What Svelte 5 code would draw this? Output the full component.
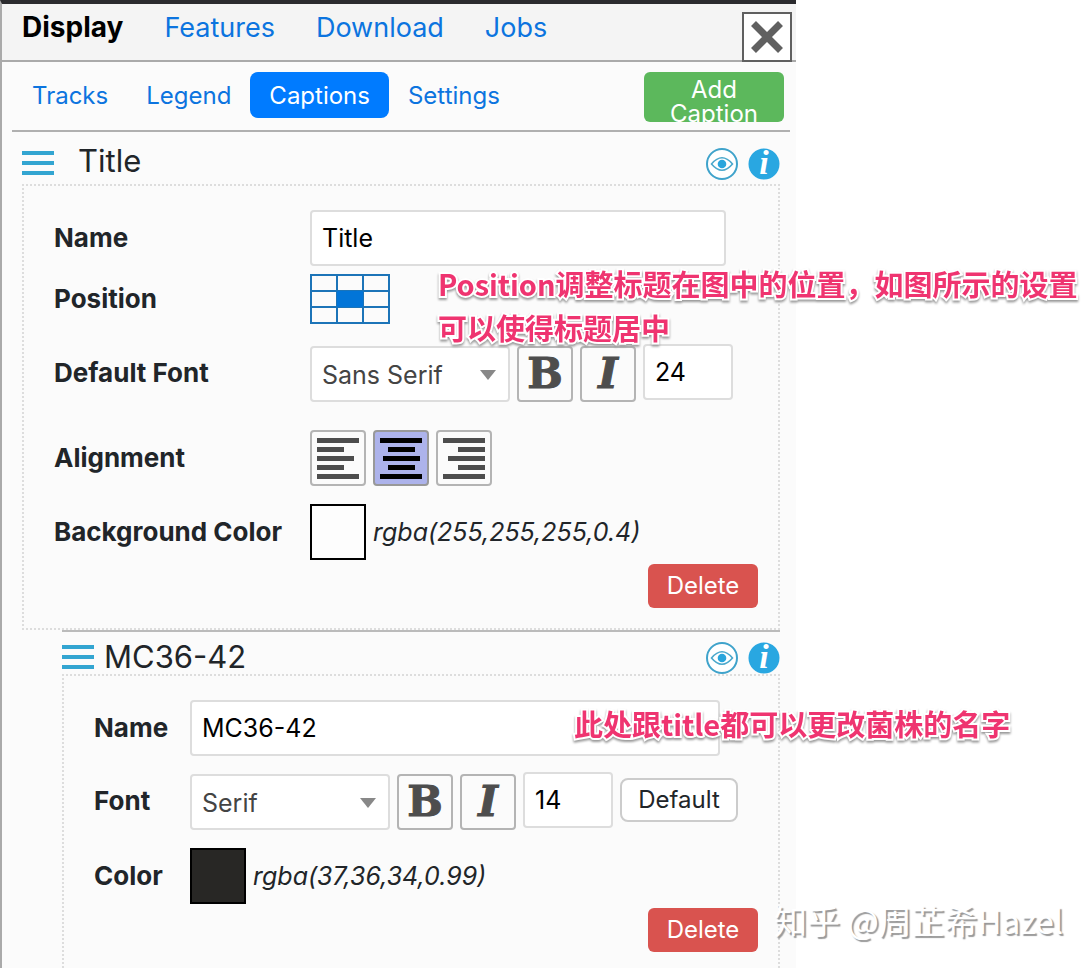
<script>
  let titleName = $state('Title');
  let captionName = $state('MC36-42');
  let titleSize = $state('24');
  let captionSize = $state('14');

  const alignments = [
    { name: 'left', x: [0, 0, 0, 0, 0] },
    { name: 'center', x: [0, 8, 3, 8, 0] },
    { name: 'right', x: [0, 15, 5, 15, 0] }
  ];
  const barWidths = [42, 27, 37, 27, 42];
  let alignment = $state('center');

  const cells = ['top left', 'top', 'top right', 'left', 'center', 'right', 'bottom left', 'bottom', 'bottom right'];
  let position = $state('center');
</script>

{#snippet menuIcon()}
  <svg class="menu" width="32" height="24" viewBox="0 0 32 24" aria-hidden="true">
    <path d="M0 2H32M0 12H32M0 22H32" stroke="#33a5d1" stroke-width="4" />
  </svg>
{/snippet}

{#snippet headIcons()}
  <div class="head-icons">
    <button class="round" aria-label="Toggle visibility">
      <svg width="32" height="32" viewBox="0 0 32 32">
        <circle cx="16" cy="16" r="15" fill="#fff" stroke="#3fa3cb" stroke-width="2" />
        <path d="M5.500 16Q16 3.500 26.500 16Q16 28.500 5.500 16Z" fill="#fff" stroke="#4aa8cc" stroke-width="1.600" />
        <circle cx="16" cy="16" r="4.300" fill="#29a5dc" />
      </svg>
    </button>
    <button class="round" aria-label="Information">
      <svg width="32" height="32" viewBox="0 0 32 32">
        <circle cx="16" cy="16" r="15.500" fill="#29a7e1" />
        <text x="16" y="26" text-anchor="middle" class="info">i</text>
      </svg>
    </button>
  </div>
{/snippet}

{#snippet styleButtons()}
  <button class="square letter" aria-label="Bold">B</button>
  <button class="square letter italic" aria-label="Italic">I</button>
{/snippet}

<div class="page">
  <main class="panel">
    <header class="top">
      <nav class="tabs">
        <a href="#display" class="current">Display</a>
        <a href="#features">Features</a>
        <a href="#download">Download</a>
        <a href="#jobs">Jobs</a>
      </nav>
      <button class="close" aria-label="Close">
        <svg width="46" height="46" viewBox="0 0 46 46">
          <path d="M9.500 9.500L36.500 36.500M36.500 9.500L9.500 36.500" stroke="#606060" stroke-width="7" />
        </svg>
      </button>
    </header>

    <div class="subbar">
      <nav class="subtabs">
        <a href="#tracks">Tracks</a>
        <a href="#legend">Legend</a>
        <a href="#captions" class="active">Captions</a>
        <a href="#settings">Settings</a>
      </nav>
      <button class="add">Add Caption</button>
    </div>

    <section class="caption">
      <div class="head wide">
        {@render menuIcon()}
        <h2>Title</h2>
        {@render headIcons()}
      </div>
      <div class="box">
        <div class="row">
          <label for="title-name">Name</label>
          <input id="title-name" class="name" bind:value={titleName} />
        </div>
        <div class="row tight">
          <span class="label">Position</span>
          <div class="grid">
            {#each cells as cell}
              <button class:on={position === cell} aria-label={cell} onclick={() => (position = cell)}></button>
            {/each}
          </div>
        </div>
        <div class="row loose">
          <label for="title-font">Default Font</label>
          <div class="controls fonts">
            <span class="select"><select id="title-font"><option>Sans Serif</option><option>Serif</option></select></span>
            {@render styleButtons()}
            <input class="size" aria-label="Default font size" bind:value={titleSize} />
          </div>
        </div>
        <div class="row looser">
          <span class="label">Alignment</span>
          <div class="controls">
            {#each alignments as a}
              <button
                class="square"
                class:chosen={alignment === a.name}
                aria-label={'Align ' + a.name}
                onclick={() => (alignment = a.name)}
              >
                <svg width="42" height="42" viewBox="0 0 42 42">
                  {#each a.x as x, i}
                    <rect {x} y={1 + i * 9} width={barWidths[i]} height="5" fill="currentColor" />
                  {/each}
                </svg>
              </button>
            {/each}
          </div>
        </div>
        <div class="row medium">
          <span class="label">Background Color</span>
          <div class="controls">
            <button class="swatch clear" aria-label="Pick background color"></button>
            <em>rgba(255,255,255,0.4)</em>
          </div>
        </div>
        <div class="actions"><button class="delete">Delete</button></div>
      </div>
    </section>

    <section class="caption nested">
      <div class="head">
        {@render menuIcon()}
        <h2>MC36-42</h2>
        {@render headIcons()}
      </div>
      <div class="box">
        <div class="row">
          <label for="caption-name">Name</label>
          <input id="caption-name" class="name" bind:value={captionName} />
        </div>
        <div class="row snug">
          <label for="caption-font">Font</label>
          <div class="controls fonts">
            <span class="select"><select id="caption-font"><option>Serif</option><option>Sans Serif</option></select></span>
            {@render styleButtons()}
            <input class="size" aria-label="Font size" bind:value={captionSize} />
            <button class="default">Default</button>
          </div>
        </div>
        <div class="row medium">
          <span class="label">Color</span>
          <div class="controls">
            <button class="swatch dark" aria-label="Pick color"></button>
            <em>rgba(37,36,34,0.99)</em>
          </div>
        </div>
        <div class="actions"><button class="delete">Delete</button></div>
      </div>
    </section>
  </main>

  <p class="note first">Position调整标题在图中的位置，如图所示的设置<br />可以使得标题居中</p>
  <p class="note second">此处跟title都可以更改菌株的名字</p>
  <p class="watermark">知乎 @周芷希Hazel</p>
</div>

<style>
  :global(body) {
    margin: 0;
    background: #fff;
  }
  .page,
  .page :global(*) {
    box-sizing: border-box;
  }
  .page {
    position: relative;
    min-height: 100vh;
    padding-right: 296px;
    display: flex;
    overflow: hidden;
    font-family: Inter, 'Liberation Sans', sans-serif;
    font-size: 24px;
    line-height: 32px;
    color: #212529;
  }
  button,
  input,
  select {
    font: inherit;
    color: inherit;
    margin: 0;
    padding: 0;
  }
  button {
    cursor: pointer;
  }
  svg {
    display: block;
    flex: none;
    overflow: visible;
  }
  a {
    color: #0c74df;
    text-decoration: none;
  }
  .panel {
    flex: 1;
    min-width: 0;
    display: flex;
    flex-direction: column;
    background: #fbfbfb;
    border-top: 4px solid #2b2b2e;
    border-left: 2px solid #aaa;
  }
  .top {
    display: flex;
    justify-content: space-between;
    align-items: flex-start;
    height: 58px;
    padding: 0 4px 0 20px;
    background: #f4f4f4;
    border-bottom: 2px solid #aaa;
  }
  .tabs {
    display: flex;
    align-items: baseline;
    gap: 41px;
    padding-top: 7px;
    font-size: 27px;
  }
  .current {
    color: #000;
    font-size: 28px;
    font-weight: 700;
  }
  .close {
    margin-top: 8px;
    background: #fff;
    border: 2px solid #606060;
  }
  .subbar {
    display: flex;
    justify-content: space-between;
    align-items: flex-start;
    height: 70px;
    margin: 0 6px 0 10px;
    padding: 10px 6px 0 0;
    border-bottom: 2px solid #b0b0b0;
  }
  .subtabs {
    display: flex;
    padding-left: 1px;
  }
  .subtabs a {
    padding: 8px 19px 6px;
    border-radius: 8px;
  }
  .subtabs .active {
    background: #007bff;
    color: #fff;
  }
  .add {
    width: 140px;
    height: 50px;
    padding: 6px 16px 0;
    display: flex;
    align-items: flex-start;
    overflow: hidden;
    border: 0;
    border-radius: 6px;
    background: #5cb85c;
    color: #fff;
    line-height: 24px;
    text-align: center;
  }
  .caption {
    margin: 0 16px 0 20px;
  }
  .nested {
    flex: 1;
    display: flex;
    flex-direction: column;
    margin-left: 60px;
    border-top: 2px solid #bbb;
  }
  .head {
    display: flex;
    align-items: center;
    height: 42px;
    padding-top: 8px;
    gap: 10px;
  }
  .wide {
    height: 52px;
    padding-top: 10px;
    gap: 24px;
  }
  h2 {
    flex: 1;
    margin: 0;
    font-size: 31px;
    line-height: 40px;
    font-weight: 400;
  }
  .wide h2 {
    padding-bottom: 4px;
  }
  .head-icons {
    display: flex;
    gap: 10px;
    padding-top: 2px;
  }
  .round {
    border: 0;
    background: none;
  }
  .info {
    font: italic bold 34px 'Liberation Serif', serif;
    fill: #fff;
  }
  .box {
    padding: 24px 20px 20px 30px;
    border: 2px dotted #ddd;
  }
  .nested .box {
    flex: 1;
    border-bottom: 0;
  }
  .row {
    display: grid;
    grid-template-columns: 256px minmax(0, 1fr);
    align-items: center;
  }
  .nested .row {
    grid-template-columns: 96px minmax(0, 1fr);
  }
  .tight {
    margin-top: 8px;
  }
  .snug {
    margin-top: 16px;
  }
  .medium {
    margin-top: 18px;
  }
  .loose {
    margin-top: 20px;
  }
  .looser {
    margin-top: 28px;
  }
  label,
  .label {
    font-size: 26px;
    font-weight: 700;
  }
  input,
  select,
  em {
    font-size: 25px;
  }
  .name,
  .size {
    height: 56px;
    padding: 0 10px;
    border: 2px solid #ddd;
    border-radius: 4px;
    background: #fff;
    color: #000;
  }
  .name {
    width: calc(100% - 32px);
  }
  .nested .name {
    width: calc(100% - 38px);
  }
  .size {
    width: 90px;
  }
  .controls {
    display: flex;
    align-items: center;
    gap: 7px;
  }
  .fonts {
    align-items: flex-end;
  }
  .fonts .size {
    margin-bottom: 2px;
  }
  .fonts .default {
    margin-bottom: 8px;
  }
  .select {
    position: relative;
    width: 200px;
  }
  .select::after {
    content: '';
    position: absolute;
    right: 14px;
    top: 24px;
    border: 8px solid transparent;
    border-top: 10px solid #888;
    border-bottom: 0;
    pointer-events: none;
  }
  select {
    display: block;
    appearance: none;
    width: 100%;
    height: 56px;
    padding: 2px 10px 0;
    border: 2px solid #ddd;
    border-radius: 4px;
    background: #fff;
    color: #444;
  }
  .square {
    width: 56px;
    height: 56px;
    display: flex;
    align-items: center;
    justify-content: center;
    border: 2px solid #b4b4b4;
    border-radius: 4px;
    background: #fbfbfb;
    color: #4d4d4d;
  }
  .chosen {
    background: #adb3eb;
    border-color: #999;
    color: #000;
  }
  .letter {
    font: bold 42px 'DejaVu Serif', serif;
    line-height: 50px;
    -webkit-text-stroke: 1px #4d4d4d;
  }
  .italic {
    font-style: italic;
  }
  .grid {
    display: grid;
    grid-template-columns: repeat(3, 1fr);
    gap: 2px;
    width: 80px;
    height: 50px;
    padding: 2px;
    background: #1c74b8;
  }
  .grid button {
    border: 0;
    background: #fbfbfb;
  }
  .grid .on {
    background: #0275d8;
    outline: 1px solid #0275d8;
  }
  .swatch {
    width: 56px;
    height: 56px;
    border: 2px solid #000;
  }
  .clear {
    background: #fdfdfd;
  }
  .dark {
    background: #282725;
  }
  .actions {
    display: flex;
    justify-content: flex-end;
    margin-top: 4px;
  }
  .delete {
    width: 110px;
    height: 44px;
    border: 0;
    border-radius: 6px;
    background: #d9534f;
    color: #fff;
  }
  .default {
    width: 118px;
    height: 44px;
    border: 2px solid #ccc;
    border-radius: 8px;
    background: #fff;
  }
  .note,
  .watermark {
    position: absolute;
    margin: 0;
    white-space: nowrap;
    font-family: 'Noto Sans CJK SC', sans-serif;
  }
  .note {
    font-size: 29px;
    line-height: 44px;
    font-weight: 700;
    color: #ef3470;
    -webkit-text-stroke: 4px #fff;
    paint-order: stroke fill;
    filter: drop-shadow(0 2px 1px #999);
  }
  .first {
    left: 438px;
    top: 261px;
  }
  .second {
    left: 574px;
    top: 701px;
  }
  .watermark {
    left: 774px;
    top: 898px;
    font-size: 33px;
    line-height: 44px;
    color: #fff;
    text-shadow: 2px 2px 1px #999;
  }
</style>
